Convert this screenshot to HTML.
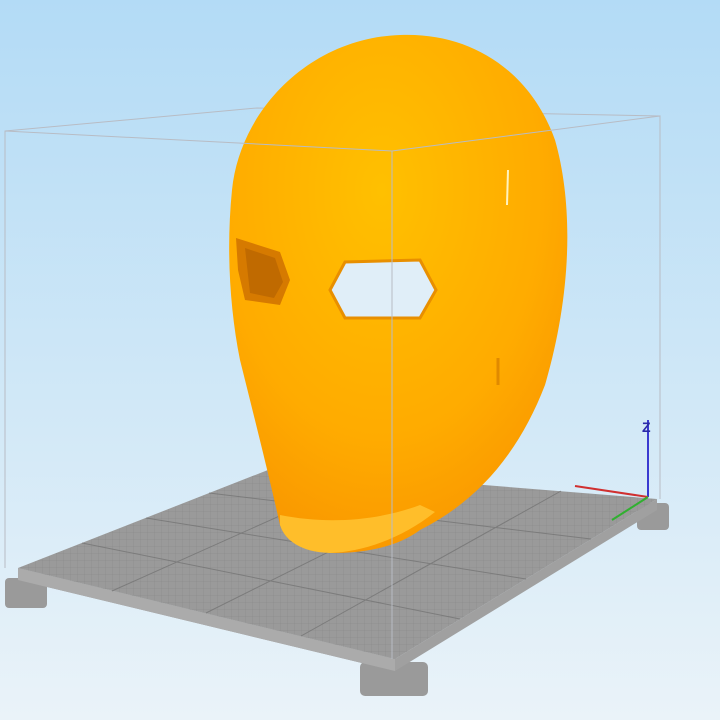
<!DOCTYPE html><html><head><style>html,body{margin:0;padding:0;width:720px;height:720px;overflow:hidden}</style></head><body>
<svg width="720" height="720" viewBox="0 0 720 720" xmlns="http://www.w3.org/2000/svg">
<defs>
<linearGradient id="bg" x1="0" y1="0" x2="0" y2="1"><stop offset="0" stop-color="#b3dbf6"/><stop offset="0.6" stop-color="#d3e9f7"/><stop offset="1" stop-color="#eaf3f9"/></linearGradient>
<radialGradient id="mk" cx="0.45" cy="0.3" r="0.8"><stop offset="0" stop-color="#ffc000"/><stop offset="0.6" stop-color="#ffab00"/><stop offset="1" stop-color="#f79000"/></radialGradient>
<pattern id="grid" width="7" height="7" patternUnits="userSpaceOnUse"><rect width="7" height="7" fill="#9a9a9a"/><path d="M0 0H7M0 0V7" stroke="#868686" stroke-width="0.5"/></pattern>
</defs>
<rect width="720" height="720" fill="url(#bg)"/>
<rect x="5" y="578" width="42" height="30" rx="4" fill="#9a9a9a"/>
<rect x="360" y="662" width="68" height="34" rx="5" fill="#9a9a9a"/>
<rect x="637" y="503" width="32" height="27" rx="4" fill="#9a9a9a"/>
<polygon points="18,568 395,659 657,499 657,510 395,671 18,580" fill="#a0a0a0"/>
<polygon points="18,568 395,659 395,671 18,580" fill="#ababab"/>
<polygon points="18,568 273,468 657,499 395,659" fill="url(#grid)"/>
<g stroke="#707070" stroke-width="1" opacity="0.7">
<line x1="82" y1="543" x2="460" y2="619"/><line x1="146" y1="518" x2="526" y2="579"/><line x1="209" y1="493" x2="591" y2="539"/>
<line x1="112" y1="591" x2="369" y2="476"/><line x1="206" y1="613" x2="465" y2="484"/><line x1="301" y1="636" x2="561" y2="491"/>
</g>
<line x1="648" y1="420" x2="648" y2="497" stroke="#3a3ad0" stroke-width="2"/>
<text x="642" y="432" font-family="Liberation Sans,sans-serif" font-size="14" font-weight="bold" fill="#2a2aa8">Z</text>
<line x1="575" y1="486" x2="648" y2="497" stroke="#d03030" stroke-width="2"/>
<line x1="648" y1="497" x2="612" y2="520" stroke="#30b030" stroke-width="2"/>
<g stroke="#b8bcc4" stroke-width="1" fill="none">
<polyline points="5,131 257,108 660,116"/>
</g>
<path d="M400,35 C470,32 530,70 555,140 C575,210 570,300 545,385 C520,450 480,500 420,530 C400,545 370,553 335,553 C300,552 285,540 280,525 C270,480 255,420 240,360 C230,310 226,250 232,190 C240,110 310,38 400,35 Z" fill="url(#mk)"/>
<path d="M280,515 C330,525 380,520 420,505 L435,512 C400,540 360,552 330,553 C300,552 285,540 280,525Z" fill="#ffbe2a"/>
<path d="M236,238 L280,252 L290,280 L280,305 L245,300 L238,270Z" fill="#d67a00"/>
<path d="M245,248 L275,258 L283,282 L274,298 L250,293Z" fill="#c06a00"/>
<path d="M330,290 L345,262 L420,260 L436,290 L420,318 L345,318Z" fill="#e0eef8" stroke="#e88f00" stroke-width="3"/>
<line x1="508" y1="170" x2="507" y2="205" stroke="#fff3c0" stroke-width="2"/>
<line x1="498" y1="358" x2="498" y2="385" stroke="#e08a00" stroke-width="3"/>
<g stroke="#b8bcc4" stroke-width="1" fill="none">
<polyline points="5,568 5,131 392,151 660,116 660,499"/>
<line x1="392" y1="151" x2="392" y2="659"/>
</g>
</svg>
</body></html>
